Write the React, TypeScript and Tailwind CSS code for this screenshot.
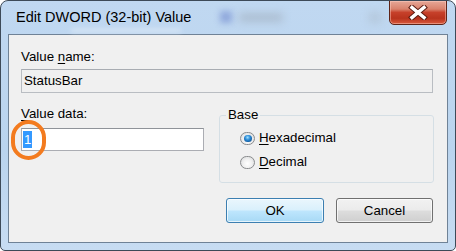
import React from 'react';

const font = { fontFamily: '"Liberation Sans", Arial, sans-serif' };

// Win7-style radio button
const Radio = ({ checked, label, accel }: { checked?: boolean; label: string; accel: number }) => (
  <div className="flex items-center h-[16px] leading-[16px]">
    <div className="w-[15px] h-[13px] rounded-full border border-[#8a8c8e] bg-[radial-gradient(circle_at_50%_60%,#ffffff_0%,#f1f1f1_45%,#d2d4d6_100%)] flex items-center justify-center">
      {checked && (
        <div className="w-[8px] h-[7px] rounded-full bg-[radial-gradient(circle_at_45%_35%,#9fe0ff_0%,#2a8ad6_40%,#0b3f78_100%)]" />
      )}
    </div>
    <span className="ml-[4px] text-[13.3px] text-black">
      {label.slice(0, accel)}
      <span className="underline underline-offset-2">{label[accel]}</span>
      {label.slice(accel + 1)}
    </span>
  </div>
);

export default function App() {
  return (
    <div
      className="relative w-[456px] h-[251px] flex flex-col px-[7px] pb-[7px] border border-[#3d4a58] rounded-t-[8px] rounded-b-[5px] bg-[linear-gradient(to_bottom,#c0d8f1_0%,#bad4ee_60%,#c7dcf2_100%)] overflow-hidden"
      style={font}
    >
      {/* blurred desktop behind the glass */}
      <div className="absolute left-[219px] top-[10px] w-[12px] h-[12px] bg-[#7d96d4] blur-[3px] opacity-70" />
      <div className="absolute left-[238px] top-[12px] w-[44px] h-[9px] bg-[#9aa6b4] blur-[4px] opacity-50" />
      <div className="absolute left-[368px] top-[11px] w-[12px] h-[11px] bg-[#a4aebb] blur-[4px] opacity-40" />
      <div className="absolute left-[70px] top-[27px] w-[110px] h-[5px] bg-[#d9e7f5] blur-[2px] opacity-70" />

      {/* title bar */}
      <div className="relative h-[33px] flex items-center pl-[8px]">
        <span className="text-[14.5px] text-black leading-none">Edit DWORD (32-bit) Value</span>
      </div>

      {/* close button */}
      <div className="absolute left-[388px] top-[-1px] w-[58px] h-[25px] rounded-b-[5px] border border-[#5e2418] bg-[linear-gradient(to_bottom,#e6a797_0%,#d9826d_35%,#c6402a_50%,#b8331d_75%,#d9593d_100%)] flex items-center justify-center shadow-[inset_0_0_0_1px_rgba(255,210,200,0.45)]">
        <svg width="20" height="15" viewBox="0 0 20 15">
          <path d="M4 2.5 L16 12.5 M16 2.5 L4 12.5" stroke="#5a1a10" strokeWidth="5.5" strokeLinecap="square" />
          <path d="M4 2.5 L16 12.5 M16 2.5 L4 12.5" stroke="#ffffff" strokeWidth="3.5" strokeLinecap="square" />
        </svg>
      </div>

      {/* client area */}
      <div className="flex-1 border border-[#6f8296] bg-[#f0f0f0] pl-[12px] pr-[13px] pt-[14px] text-[13.3px] text-black">
        <div className="h-[16px] leading-[16px]">
          Value <span className="underline underline-offset-2">n</span>ame:
        </div>
        <div className="mt-[4px] h-[24px] border border-[#b9bdc2] border-t-[#a8acb2] bg-[#f0f0f0] flex items-center pl-[2px] mr-[1px]">
          StatusBar
        </div>

        <div className="mt-[13px] flex gap-[15px]">
          <div className="w-[183px]">
            <div className="h-[16px] leading-[16px]">
              <span className="underline underline-offset-2">V</span>alue data:
            </div>
            <div className="mt-[6px] h-[23px] border border-[#abadb3] border-t-[#8f9399] bg-white flex items-center pl-[1px]">
              <span className="h-[17px] leading-[17px] px-[1px] bg-[#3399ff] text-white">1</span>
            </div>
          </div>

          <fieldset className="w-[215px] mt-[1px] border border-[#d5dfe5] rounded-[3px] pl-[6px] pt-[7px] pb-[12px]">
            <legend className="px-[2px] h-[16px] leading-[16px]">Base</legend>
            <div className="pl-[14px] flex flex-col gap-[8px]">
              <Radio checked label="Hexadecimal" accel={0} />
              <Radio label="Decimal" accel={0} />
            </div>
          </fieldset>
        </div>

        <div className="mt-[15px] flex justify-end gap-[12px] mr-[1px]">
          <button className="w-[98px] h-[25px] rounded-[3px] border border-[#3c7fb1] bg-[linear-gradient(to_bottom,#eaf6fd_0%,#d9f0fc_48%,#bee6fd_52%,#a7d9f5_100%)] shadow-[inset_0_0_0_1px_rgba(255,255,255,0.7)] text-[13.3px]">
            OK
          </button>
          <button className="w-[97px] h-[25px] rounded-[3px] border border-[#707070] bg-[linear-gradient(to_bottom,#f2f2f2_0%,#ebebeb_48%,#dddddd_52%,#cfcfcf_100%)] shadow-[inset_0_0_0_1px_rgba(255,255,255,0.7)] text-[13.3px]">
            Cancel
          </button>
        </div>
      </div>

      {/* orange annotation circle */}
      <div className="absolute left-[10px] top-[119px] w-[35px] h-[40px] rounded-full border-[4px] border-[#f37b1f]" />
    </div>
  );
}
